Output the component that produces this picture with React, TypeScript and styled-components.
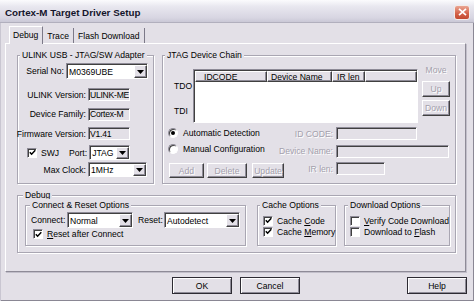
import styled, { createGlobalStyle, css } from "styled-components";

const BG = "#e3e0e7";
const SHADE = "#8e8b97";
const DIM = "#a3a0ac";

const GlobalStyle = createGlobalStyle`
  html, body {
    margin: 0;
    padding: 0;
    background: ${BG};
  }
  body {
    font-family: "Liberation Sans", Arial, sans-serif;
    font-size: 8.6px;
    color: #000;
  }
  *, *::before, *::after {
    box-sizing: border-box;
  }
`;

const sunken = css`
  border: 1px solid;
  border-color: ${SHADE} #fff #fff ${SHADE};
  box-shadow: inset 1px 1px 0 #404040;
`;

const raised = css`
  border: 1px solid;
  border-color: #fff #404040 #404040 #fff;
  box-shadow: inset -1px -1px 0 ${SHADE};
`;

const Window = styled.div`
  width: 474px;
  height: 301px;
  overflow: hidden;
  background: ${BG};
  box-shadow: inset 1px 0 0 #c9c6d1, inset -1px 0 0 #8a8794, inset 0 -1px 0 #8a8794;
`;

const TitleBar = styled.div`
  height: 23px;
  padding: 2px 4px 0 5px;
  display: flex;
  align-items: center;
  justify-content: space-between;
  background: linear-gradient(#fbfbfd, #e8e7ef 30%, #d8d6e2 80%, #cac8d6);
  border-bottom: 1px solid #b1afbd;
`;

const Title = styled.span`
  font-weight: 700;
  font-size: 9.8px;
  color: #15152b;
`;

const CloseButton = styled.div`
  width: 16px;
  height: 15px;
  border-radius: 3px;
  border: 1px solid #f3ece9;
  background: linear-gradient(#eaa593, #d35f45 60%, #c24a31);
  display: flex;
  align-items: center;
  justify-content: center;
`;

const Body = styled.div`
  padding: 3px 8px 0 5px;
`;

const TabStrip = styled.div`
  display: flex;
  align-items: flex-end;
  height: 17px;
  padding-left: 4px;
`;

const Tab = styled.div<{ $active?: boolean }>`
  position: relative;
  z-index: 1;
  display: flex;
  align-items: center;
  height: ${(p) => (p.$active ? 18 : 15)}px;
  margin-bottom: ${(p) => (p.$active ? -1 : 0)}px;
  padding: ${(p) => (p.$active ? "0 4px 1px 3px" : "0 4px")};
  background: ${BG};
  border-right: 1px solid #7c7988;
  border-left: ${(p) => (p.$active ? "1px solid #fff" : "none")};
  border-top: ${(p) => (p.$active ? "1px solid #fff" : "none")};
  white-space: nowrap;
`;

const Panel = styled.div`
  height: 229px;
  padding: 11px 0 0 11px;
  border: 1px solid;
  border-color: #fff ${SHADE} ${SHADE} #fff;
  box-shadow: 1px 1px 0 #c2bfca;
`;

const TopRow = styled.div`
  display: flex;
  gap: 8px;
`;

const Group = styled.div<{ $w: number; $h: number; $mt?: number; $ml?: number }>`
  position: relative;
  flex: none;
  width: ${(p) => p.$w}px;
  height: ${(p) => p.$h}px;
  margin-top: ${(p) => p.$mt ?? 0}px;
  margin-left: ${(p) => p.$ml ?? 0}px;
  border: 1px solid #a9a6b2;
  box-shadow: inset 1px 1px 0 #fff, 1px 1px 0 #fff;
`;

const Caption = styled.span<{ $left: number }>`
  position: absolute;
  top: -7px;
  left: ${(p) => p.$left}px;
  padding: 0 2px;
  line-height: 12px;
  background: ${BG};
  white-space: nowrap;
`;

const Row = styled.div<{ $h: number; $mt?: number; $pl?: number }>`
  display: flex;
  align-items: center;
  height: ${(p) => p.$h}px;
  margin-top: ${(p) => p.$mt ?? 0}px;
  padding-left: ${(p) => p.$pl ?? 0}px;
  white-space: nowrap;
`;

const Label = styled.span<{ $w?: number; $dim?: boolean; $gap?: number; $ml?: number; $left?: boolean }>`
  flex: none;
  display: flex;
  justify-content: ${(p) => (p.$left ? "flex-start" : "flex-end")};
  width: ${(p) => (p.$w ? `${p.$w}px` : "auto")};
  margin-right: ${(p) => p.$gap ?? 2}px;
  margin-left: ${(p) => p.$ml ?? 0}px;
  white-space: nowrap;
  color: ${(p) => (p.$dim ? DIM : "#000")};
  text-shadow: ${(p) => (p.$dim ? "1px 1px 0 #fff" : "none")};
`;

const TextBox = styled.div<{ $w: number; $h?: number }>`
  ${sunken};
  flex: none;
  width: ${(p) => p.$w}px;
  height: ${(p) => p.$h ?? 13}px;
  padding-left: 1px;
  display: flex;
  align-items: center;
  background: ${BG};
  overflow: hidden;
  white-space: nowrap;
  letter-spacing: -0.25px;
`;

const ComboBox = styled.div<{ $w: number; $h: number }>`
  ${sunken};
  flex: none;
  display: flex;
  width: ${(p) => p.$w}px;
  height: ${(p) => p.$h}px;
  padding: 1px 0 0 1px;
  background: #fff;
`;

const ComboText = styled.span`
  flex: 1;
  display: flex;
  align-items: center;
  padding-left: 1px;
  overflow: hidden;
  white-space: nowrap;
`;

const ComboArrow = styled.span`
  ${raised};
  flex: none;
  width: 13px;
  display: flex;
  align-items: center;
  justify-content: center;
  background: ${BG};
`;

const Combo = ({ w, h, value }: { w: number; h: number; value: string }) => (
  <ComboBox $w={w} $h={h}>
    <ComboText>{value}</ComboText>
    <ComboArrow>
      <svg width="7" height="4" viewBox="0 0 7 4">
        <polygon points="0,0 7,0 3.5,4" fill="#000" />
      </svg>
    </ComboArrow>
  </ComboBox>
);

const CheckBox = styled.span`
  ${sunken};
  flex: none;
  width: 10px;
  height: 10px;
  background: #fff;
  display: flex;
  align-items: center;
  justify-content: center;
`;

const Check = ({ checked }: { checked?: boolean }) => (
  <CheckBox>
    {checked && (
      <svg width="7" height="7" viewBox="0 0 7 7">
        <path d="M0.8 3.2 L2.6 5.2 L6.3 1.2" stroke="#000" strokeWidth="1.5" fill="none" />
      </svg>
    )}
  </CheckBox>
);

const Radio = styled.span<{ $on?: boolean }>`
  flex: none;
  width: 10px;
  height: 10px;
  border-radius: 50%;
  border: 1px solid;
  border-color: ${SHADE} #fff #fff ${SHADE};
  box-shadow: inset 1px 1px 0 #404040;
  background: #fff;
  display: flex;
  align-items: center;
  justify-content: center;
  &::after {
    content: "";
    width: 4px;
    height: 4px;
    border-radius: 50%;
    background: ${(p) => (p.$on ? "#000" : "transparent")};
  }
`;

const OptionText = styled.span<{ $gap?: number }>`
  margin-left: ${(p) => p.$gap ?? 4}px;
  white-space: nowrap;
`;

const U = styled.span`
  text-decoration: underline;
`;

const Button = styled.button<{ $w: number; $h: number; $ml?: number; $mt?: number; $strong?: boolean }>`
  ${raised};
  flex: none;
  width: ${(p) => p.$w}px;
  height: ${(p) => p.$h}px;
  margin: ${(p) => p.$mt ?? 0}px 0 0 ${(p) => p.$ml ?? 0}px;
  padding: 0;
  font: inherit;
  color: #000;
  background: ${BG};
  &:disabled {
    color: ${DIM};
    text-shadow: 1px 1px 0 #fff;
  }
  ${(p) =>
    p.$strong &&
    css`
      border: 1px solid #2d2b33;
      box-shadow: inset 1px 1px 0 #fff, inset -1px -1px 0 ${SHADE};
    `}
`;

const ChainArea = styled.div`
  display: flex;
  align-items: flex-start;
  height: 54px;
  margin-top: 13px;
  padding-left: 11px;
`;

const TermCol = styled.div`
  width: 19px;
  display: flex;
  flex-direction: column;
  gap: 13px;
  padding-top: 11px;
  line-height: 12px;
`;

const ChainList = styled.div`
  ${sunken};
  width: 225px;
  height: 54px;
  padding: 1px 0 0 1px;
  background: #fff;
`;

const ListHeader = styled.div`
  display: flex;
  height: 11px;
`;

const HeaderCell = styled.div<{ $w?: number; $pl?: number }>`
  ${raised};
  flex: ${(p) => (p.$w ? "none" : "1")};
  width: ${(p) => (p.$w ? `${p.$w}px` : "auto")};
  padding-left: ${(p) => p.$pl ?? 3}px;
  display: flex;
  align-items: center;
  background: ${BG};
  white-space: nowrap;
  overflow: hidden;
`;

const MoveCol = styled.div`
  width: 28px;
  margin: -5px 0 0 4px;
  display: flex;
  flex-direction: column;
  align-items: center;
  line-height: 12px;
`;

const ConfigArea = styled.div`
  display: flex;
  margin-top: 4px;
`;

const DetectCol = styled.div`
  width: 116px;
  flex: none;
  padding-left: 5px;
`;

const ManualCol = styled.div`
  display: flex;
  flex-direction: column;
  gap: 4.5px;
`;

const ButtonBar = styled.div`
  display: flex;
  margin-top: 8px;
  padding-left: 1px;
`;

const OptionsRow = styled.div`
  display: flex;
  margin-top: 9px;
  padding-left: 7px;
`;

const DialogButtons = styled.div`
  display: flex;
  margin-top: 5px;
  padding-left: 167px;
`;

export default function App() {
  return (
    <>
      <GlobalStyle />
      <Window>
        <TitleBar>
          <Title>Cortex-M Target Driver Setup</Title>
          <CloseButton>
            <svg width="9" height="8" viewBox="0 0 9 8">
              <path d="M1 0.8 L8 7.2 M8 0.8 L1 7.2" stroke="#fff" strokeWidth="1.7" />
            </svg>
          </CloseButton>
        </TitleBar>
        <Body>
          <TabStrip>
            <Tab $active>Debug</Tab>
            <Tab>Trace</Tab>
            <Tab>Flash Download</Tab>
          </TabStrip>
          <Panel>
            <TopRow>
              <Group $w={137} $h={129}>
                <Caption $left={2}>ULINK USB - JTAG/SW Adapter</Caption>
                <Row $h={16} $mt={7}>
                  <Label $w={46}>Serial No:</Label>
                  <Combo w={82} h={16} value="M0369UBE" />
                </Row>
                <Row $h={13} $mt={9}>
                  <Label $w={68}>ULINK Version:</Label>
                  <TextBox $w={42}>ULINK-ME</TextBox>
                </Row>
                <Row $h={13} $mt={6.5}>
                  <Label $w={68}>Device Family:</Label>
                  <TextBox $w={42}>Cortex-M</TextBox>
                </Row>
                <Row $h={13} $mt={6.5}>
                  <Label $w={68}>Firmware Version:</Label>
                  <TextBox $w={42}>V1.41</TextBox>
                </Row>
                <Row $h={15} $mt={5} $pl={9}>
                  <Check checked />
                  <OptionText $gap={4}>SWJ</OptionText>
                  <Label $w={28}>Port:</Label>
                  <Combo w={41} h={15} value="JTAG" />
                </Row>
                <Row $h={15} $mt={2}>
                  <Label $w={68}>Max Clock:</Label>
                  <Combo w={59} h={15} value="1MHz" />
                </Row>
              </Group>

              <Group $w={294} $h={129}>
                <Caption $left={2}>JTAG Device Chain</Caption>
                <ChainArea>
                  <TermCol>
                    <span>TDO</span>
                    <span>TDI</span>
                  </TermCol>
                  <ChainList>
                    <ListHeader>
                      <HeaderCell $w={72} $pl={8}>IDCODE</HeaderCell>
                      <HeaderCell $w={65}>Device Name</HeaderCell>
                      <HeaderCell $w={33} $pl={4}>IR len</HeaderCell>
                      <HeaderCell />
                    </ListHeader>
                  </ChainList>
                  <MoveCol>
                    <Label $dim $gap={0}>Move</Label>
                    <Button $w={28} $h={16} $mt={5} disabled>Up</Button>
                    <Button $w={28} $h={16} $mt={3} disabled>Down</Button>
                  </MoveCol>
                </ChainArea>
                <ConfigArea>
                  <DetectCol>
                    <Row $h={12}>
                      <Radio $on />
                      <OptionText $gap={5}>Automatic Detection</OptionText>
                    </Row>
                    <Row $h={12} $mt={4}>
                      <Radio />
                      <OptionText $gap={5}>Manual Configuration</OptionText>
                    </Row>
                    <ButtonBar>
                      <Button $w={35} $h={15} disabled>Add</Button>
                      <Button $w={40} $h={15} $ml={3} disabled>Delete</Button>
                      <Button $w={32} $h={15} $ml={5} disabled>Update</Button>
                    </ButtonBar>
                  </DetectCol>
                  <ManualCol>
                    <Row $h={13}>
                      <Label $w={54} $dim $gap={3}>ID CODE:</Label>
                      <TextBox $w={81} />
                    </Row>
                    <Row $h={13}>
                      <Label $w={54} $dim $gap={3}>Device Name:</Label>
                      <TextBox $w={113} />
                    </Row>
                    <Row $h={13}>
                      <Label $w={54} $dim $gap={3}>IR len:</Label>
                      <TextBox $w={49} />
                    </Row>
                  </ManualCol>
                </ConfigArea>
              </Group>
            </TopRow>

            <Group $w={439} $h={58} $mt={11}>
              <Caption $left={5}>Debug</Caption>
              <OptionsRow>
                <Group $w={221} $h={41}>
                  <Caption $left={4}>Connect &amp; Reset Options</Caption>
                  <Row $h={16} $mt={6} $pl={5}>
                    <Label $w={36} $left $gap={0}>Connect:</Label>
                    <Combo w={66} h={16} value="Normal" />
                    <Label $w={26} $left $gap={0} $ml={5}>Reset:</Label>
                    <Combo w={76} h={16} value="Autodetect" />
                  </Row>
                  <Row $h={10} $mt={1} $pl={7}>
                    <Check checked />
                    <OptionText>
                      <U>R</U>eset after Connect
                    </OptionText>
                  </Row>
                </Group>
                <Group $w={79} $h={41} $ml={11}>
                  <Caption $left={2}>Cache Options</Caption>
                  <Row $h={11} $mt={9} $pl={5}>
                    <Check checked />
                    <OptionText>
                      Cache <U>C</U>ode
                    </OptionText>
                  </Row>
                  <Row $h={11} $pl={5}>
                    <Check checked />
                    <OptionText>
                      Cache <U>M</U>emory
                    </OptionText>
                  </Row>
                </Group>
                <Group $w={106} $h={41} $ml={8}>
                  <Caption $left={3}>Download Options</Caption>
                  <Row $h={11} $mt={9} $pl={5}>
                    <Check />
                    <OptionText>
                      <U>V</U>erify Code Download
                    </OptionText>
                  </Row>
                  <Row $h={11} $pl={5}>
                    <Check />
                    <OptionText>
                      Download to <U>F</U>lash
                    </OptionText>
                  </Row>
                </Group>
              </OptionsRow>
            </Group>
          </Panel>
          <DialogButtons>
            <Button $w={60} $h={17} $strong>OK</Button>
            <Button $w={60} $h={17} $ml={8} $strong>Cancel</Button>
            <Button $w={60} $h={17} $ml={107} $strong>Help</Button>
          </DialogButtons>
        </Body>
      </Window>
    </>
  );
}
